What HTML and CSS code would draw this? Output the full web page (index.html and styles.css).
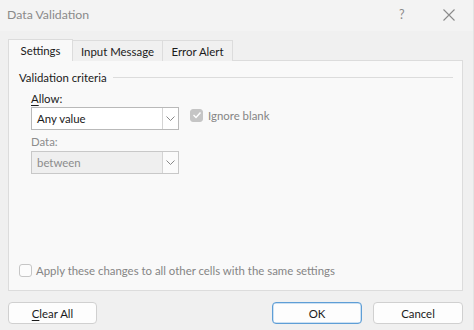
FILE: index.html
```html
<!DOCTYPE html>
<html>
<head>
<meta charset="utf-8">
<link rel="stylesheet" href="styles.css">
</head>
<body>
<div class="window">
  <div class="titlebar">
    <span class="title">Data Validation</span>
    <span class="help">?</span>
    <span class="close">
      <svg width="14" height="14" viewBox="0 0 14 14"><path d="M1.5 1.5 L12.5 12.5 M12.5 1.5 L1.5 12.5" stroke="#8a8a8a" stroke-width="1.1" fill="none"/></svg>
    </span>
  </div>
  <div class="body">
    <div class="tabs">
      <div class="tab active">Settings</div>
      <div class="tab">Input Message</div>
      <div class="tab">Error Alert</div>
    </div>
    <div class="panel">
      <div class="group-head"><span>Validation criteria</span><span class="rule"></span></div>
      <div class="criteria">
        <div class="col">
          <div class="lbl"><u>A</u>llow:</div>
          <div class="select">
            <span class="value">Any value</span>
            <span class="arrow"><svg width="9" height="5" viewBox="0 0 9 5"><path d="M0.5 0.5 L4.5 4.5 L8.5 0.5" stroke="#7a7a7a" stroke-width="0.9" fill="none"/></svg></span>
          </div>
          <div class="lbl dim">Data:</div>
          <div class="select disabled">
            <span class="value">between</span>
            <span class="arrow"><svg width="9" height="5" viewBox="0 0 9 5"><path d="M0.5 0.5 L4.5 4.5 L8.5 0.5" stroke="#7a7a7a" stroke-width="0.9" fill="none"/></svg></span>
          </div>
        </div>
        <div class="ignore">
          <span class="cb checked"><svg width="10" height="8" viewBox="0 0 10 8"><path d="M1.5 4 L4 6.5 L8.5 1.5" stroke="#fff" stroke-width="1.4" fill="none"/></svg></span>
          <span class="dim2">Ignore blank</span>
        </div>
      </div>
      <div class="spacer"></div>
      <div class="apply">
        <span class="cb"></span>
        <span class="dim2">Apply these changes to all other cells with the same settings</span>
      </div>
    </div>
    <div class="buttons">
      <div class="btn"><u>C</u>lear All</div>
      <div class="grow"></div>
      <div class="btn default">OK</div>
      <div class="btn">Cancel</div>
    </div>
  </div>
</div>
</body>
</html>
```
FILE: styles.css
```css
html, body {
  margin: 0;
  padding: 0;
  width: 474px;
  height: 330px;
  overflow: hidden;
  background: #f0f0f0;
  font-family: "Lato", "Noto Sans", sans-serif;
  font-size: 11.4px;
  color: #1a1a1a;
}
.window {
  width: 474px;
  height: 330px;
  display: flex;
  flex-direction: column;
  box-sizing: border-box;
  border-right: 1px solid #e4e4e4;
}
.titlebar {
  height: 31px;
  display: flex;
  align-items: center;
  background: #f3f3f3;
  padding-left: 7px;
  box-sizing: border-box;
}
.title {
  font-size: 12.3px;
  color: #8a8a8a;
  flex: 1;
  margin-top: -2px;
}
.help {
  font-size: 12.5px;
  color: #8a8a8a;
  width: 14px;
  margin-right: 29px;
  margin-top: -2px;
}
.close {
  width: 14px;
  height: 14px;
  margin-right: 17px;
  margin-top: -2px;
}
.close svg { display: block; }
.body {
  flex: 1;
  display: flex;
  flex-direction: column;
  padding: 8px 10px 0 8px;
}
.tabs {
  display: flex;
  align-items: flex-end;
  height: 22px;
  position: relative;
  z-index: 1;
  margin-bottom: -1px;
}
.tab {
  height: 21px;
  box-sizing: border-box;
  border: 1px solid #dcdcdc;
  border-bottom: none;
  border-left: none;
  background: #f0f0f0;
  display: flex;
  align-items: center;
  justify-content: center;
  color: #1a1a1a;
}
.tab:nth-child(2) { width: 90px; }
.tab:nth-child(3) { width: 70px; }
.tab.active {
  width: 65px;
  height: 22px;
  background: #f9f9f9;
  border-left: 1px solid #dcdcdc;
  padding-bottom: 1px;
}
.panel {
  height: 231px;
  box-sizing: border-box;
  border: 1px solid #dcdcdc;
  background: #f9f9f9;
  display: flex;
  flex-direction: column;
  padding: 8px 9px 10px 10px;
}
.group-head {
  display: flex;
  align-items: center;
  gap: 6px;
  height: 16px;
}
.rule {
  flex: 1;
  height: 0;
  border-top: 1px solid #dcdcdc;
  margin-right: 0;
  margin-top: 1px;
}
.criteria {
  display: flex;
  padding-left: 12px;
  margin-top: 6px;
}
.col {
  display: flex;
  flex-direction: column;
  width: 148px;
}
.lbl {
  height: 15px;
  line-height: 15px;
  margin-bottom: 1px;
}
.lbl.dim { color: #8c8c8c; margin-top: 4px; margin-bottom: 2px; }
.select {
  height: 23px;
  box-sizing: border-box;
  border: 1px solid #b9b9b9;
  background: #ffffff;
  display: flex;
  align-items: center;
}
.select .value {
  flex: 1;
  padding-left: 5px;
}
.select .arrow {
  width: 15px;
  height: 21px;
  border-left: 1px solid #d4d4d4;
  display: flex;
  align-items: center;
  justify-content: center;
}
.select.disabled {
  background: #efefef;
  border-color: #c8c8c8;
}
.select.disabled .value { color: #8c8c8c; }
.select.disabled .arrow { background: #fbfbfb; }
.ignore {
  display: flex;
  align-items: center;
  gap: 5px;
  margin-left: 11px;
  margin-top: 16px;
  height: 16px;
}
.cb {
  width: 13px;
  height: 13px;
  box-sizing: border-box;
  border: 1px solid #c6c6c6;
  border-radius: 3px;
  background: #fcfcfc;
  display: flex;
  align-items: center;
  justify-content: center;
}
.cb.checked {
  background: #c5c5c5;
  border-color: #c5c5c5;
}
.dim2 { color: #858585; }
.spacer { flex: 1; }
.apply {
  display: flex;
  align-items: center;
  gap: 4px;
  height: 16px;
  margin-bottom: 2px;
}
.buttons {
  display: flex;
  margin-top: 11px;
  gap: 11px;
}
.grow { flex: 1; }
.btn {
  width: 90px;
  height: 22px;
  box-sizing: border-box;
  border: 1px solid #d0d0d0;
  border-radius: 4px;
  background: #fdfdfd;
  display: flex;
  align-items: center;
  justify-content: center;
  color: #1a1a1a;
}
.btn:first-child { width: 89px; }
.btn.default {
  border: 1px solid #5e9ed6;
  box-shadow: inset 0 0 0 0.5px #9cc4e8;
}
u { text-decoration-thickness: 1px; text-underline-offset: 2px; }
```
